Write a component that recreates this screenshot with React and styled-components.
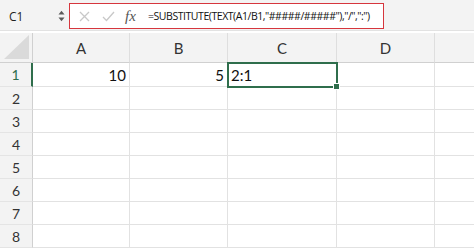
import React from 'react'
import styled, { createGlobalStyle } from 'styled-components'

const GlobalStyle = createGlobalStyle`
  html, body {
    margin: 0;
    padding: 0;
    background: #ffffff;
    overflow: hidden;
  }
  body {
    font-family: Lato, "Open Sans", sans-serif;
  }
`

const columns = [
  { name: 'A', width: 97 },
  { name: 'B', width: 98 },
  { name: 'C', width: 109 },
  { name: 'D', width: 98 },
  { name: '', width: 60 },
]

const rows = [
  { n: 1, cells: ['10', '5', '2:1', '', ''] },
  { n: 2 }, { n: 3 }, { n: 4 }, { n: 5 }, { n: 6 }, { n: 7 }, { n: 8 },
]

const FORMULA = '=SUBSTITUTE(TEXT(A1/B1,"#####/#####"),"/",":")'

function App() {
  return (
    <>
      <GlobalStyle />
      <Page>
        <Toolbar>
          <NameBox>
            <NameText>C1</NameText>
            <Spinner>
              <svg width="7" height="12" viewBox="0 0 7 12">
                <path d="M0.5 4.5 L3.5 0.8 L6.5 4.5 Z" fill="#5a5a5a" />
                <path d="M0.5 7.5 L3.5 11.2 L6.5 7.5 Z" fill="#5a5a5a" />
              </svg>
            </Spinner>
          </NameBox>
          <FormulaBar>
            <BarIcon>
              <svg width="11" height="11" viewBox="0 0 11 11">
                <path d="M1 1 L10 10 M10 1 L1 10" stroke="#c8c8c8" strokeWidth="1.3" fill="none" />
              </svg>
            </BarIcon>
            <BarIcon>
              <svg width="13" height="11" viewBox="0 0 13 11">
                <path d="M1 6 L4.5 9.5 L12 1" stroke="#c8c8c8" strokeWidth="1.3" fill="none" />
              </svg>
            </BarIcon>
            <Fx>fx</Fx>
            <Formula>{FORMULA}</Formula>
          </FormulaBar>
        </Toolbar>
        <Sheet>
          <Corner>
            <svg width="28" height="26" viewBox="0 0 28 26">
              <path d="M27 1 L27 25 L2 25 Z" fill="#dadada" />
            </svg>
          </Corner>
          {columns.map((c, i) => (
            <ColHead key={i} $last={i === columns.length - 1}>{c.name}</ColHead>
          ))}
          {rows.map(r => (
            <React.Fragment key={r.n}>
              <RowHead $active={r.n === 1}>{r.n}</RowHead>
              {columns.map((c, i) => {
                const v = r.cells ? r.cells[i] : ''
                const selected = r.n === 1 && i === 2
                return (
                  <Cell key={i} $align={v && !selected ? 'right' : 'left'} $selected={selected}>
                    {v}
                    {selected && <FillHandle />}
                  </Cell>
                )
              })}
            </React.Fragment>
          ))}
        </Sheet>
      </Page>
    </>
  )
}

const Page = styled.div`
  width: 474px;
  height: 248px;
  display: flex;
  flex-direction: column;
  background: #ffffff;
`

const Toolbar = styled.div`
  height: 31px;
  display: flex;
  align-items: center;
  background: #f3f3f3;
  border-bottom: 1px solid #e2e2e2;
  box-sizing: border-box;
  padding-top: 2px;
`

const NameBox = styled.div`
  width: 69px;
  height: 25px;
  flex-shrink: 0;
  display: flex;
  align-items: center;
  justify-content: space-between;
  padding: 0 4px 0 9px;
  box-sizing: border-box;
`

const NameText = styled.span`
  font-family: "Open Sans", sans-serif;
  font-size: 12px;
  color: #1f1f1f;
`

const Spinner = styled.span`
  display: flex;
  align-items: center;
`

const FormulaBar = styled.div`
  width: 315px;
  height: 26px;
  flex-shrink: 0;
  box-sizing: border-box;
  border: 1.5px solid #d6363d;
  background: #ffffff;
  display: flex;
  align-items: center;
  padding-left: 9px;
  overflow: hidden;
`

const BarIcon = styled.span`
  width: 23px;
  flex-shrink: 0;
  display: flex;
  align-items: center;
  justify-content: flex-start;
`

const Fx = styled.span`
  font-family: "Liberation Serif", serif;
  font-style: italic;
  font-size: 15px;
  color: #555555;
  width: 22px;
  flex-shrink: 0;
  line-height: 16px;
  margin-right: 1px;
`

const Formula = styled.span`
  font-family: "Open Sans", sans-serif;
  font-size: 10.5px;
  color: #111111;
  white-space: nowrap;
  letter-spacing: -0.45px;
`

const Sheet = styled.div`
  margin-top: 2px;
  display: grid;
  grid-template-columns: 33px ${columns.map(c => c.width + 'px').join(' ')};
  grid-template-rows: 30px 24px repeat(7, 23px);
  background: #ffffff;
`

const Corner = styled.div`
  background: #f3f3f3;
  border-right: 1px solid #d0d0d0;
  border-bottom: 1px solid #d0d0d0;
  display: flex;
  align-items: flex-end;
  justify-content: flex-end;
  box-sizing: border-box;
  padding: 0 2px 2px 0;
`

const ColHead = styled.div`
  background: #f3f3f3;
  border-right: ${p => (p.$last ? 'none' : '1px solid #dedede')};
  border-bottom: 1px solid #d0d0d0;
  display: flex;
  align-items: center;
  justify-content: center;
  font-size: 15px;
  color: #333333;
  box-sizing: border-box;
`

const RowHead = styled.div`
  background: #f3f3f3;
  border-right: ${p => (p.$active ? '2px solid #2f6e4c' : '1px solid #d0d0d0')};
  border-bottom: 1px solid #e4e4e4;
  display: flex;
  align-items: center;
  justify-content: center;
  font-size: 14px;
  color: ${p => (p.$active ? '#2f6e4c' : '#333333')};
  box-sizing: border-box;
`

const Cell = styled.div`
  position: relative;
  border-right: 1px solid #e2e2e2;
  border-bottom: 1px solid #e2e2e2;
  box-sizing: border-box;
  display: flex;
  align-items: center;
  justify-content: ${p => (p.$align === 'right' ? 'flex-end' : 'flex-start')};
  padding: 0 3px;
  font-size: 15px;
  color: #111111;
  ${p => p.$selected && `
    outline: 2px solid #2f6e4c;
    outline-offset: -1px;
    z-index: 1;
  `}
`

const FillHandle = styled.span`
  position: absolute;
  right: -4px;
  bottom: -4px;
  width: 5px;
  height: 5px;
  background: #2f6e4c;
  border: 1px solid #ffffff;
`

export default App
